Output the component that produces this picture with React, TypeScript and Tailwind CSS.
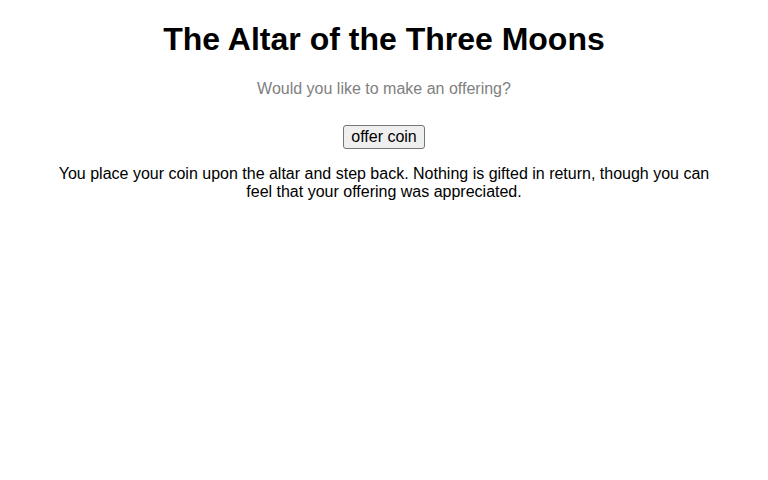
export default function App() {
  return (
    <div className="px-[16px] text-center text-black bg-white min-h-[480px]" style={{ fontFamily: '"Liberation Sans", Arial, sans-serif' }}>
      <h1 className="text-[32px] font-bold leading-[37px] pt-[21px] mb-[22px]">The Altar of the Three Moons</h1>
      <p className="text-[16px] leading-[18px] text-[#808080] mb-[27px]">Would you like to make an offering?</p>
      <div className="leading-[18px]">
        <button className="text-[16px] leading-[18px] px-[7px] py-[2px] bg-[#efefef] border border-[#767676] rounded-[3px] text-black">offer coin</button>
      </div>
      <p className="text-[16px] leading-[18px] mt-[16px] mx-auto max-w-[660px]">
        You place your coin upon the altar and step back. Nothing is gifted in return, though you can feel that your offering was appreciated.
      </p>
    </div>
  );
}
